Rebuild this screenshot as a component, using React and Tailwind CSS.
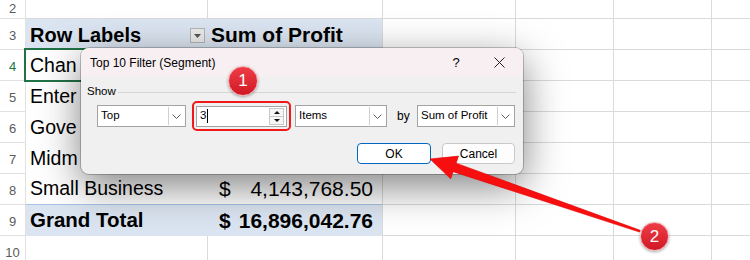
import React from 'react';

const GRID = 'border-[#dadada]';

function Row({ num, height = 'h-[31px]', numClass = 'text-[#5b5b5b] pt-[3px]', aClass = `border-b border-r ${GRID}`, bClass = `border-b border-r ${GRID}`, a, b }) {
  return (
    <div className={`flex ${height}`}>
      <div className={`flex w-[26px] shrink-0 items-center justify-center border-b border-r border-[#e1e1e1] text-[13px] ${numClass}`}>{num}</div>
      <div className={`relative flex w-[182px] shrink-0 items-center pl-[4px] ${aClass}`}>{a}</div>
      <div className={`flex w-[175px] shrink-0 items-center ${bClass}`}>{b}</div>
      <div className={`w-[133px] shrink-0 border-b border-r ${GRID}`} />
      <div className={`w-[98px] shrink-0 border-b border-r ${GRID}`} />
      <div className={`w-[98px] shrink-0 border-b border-r ${GRID}`} />
      <div className={`flex-1 border-b ${GRID}`} />
    </div>
  );
}

function Chevron() {
  return (
    <svg width="9" height="5" viewBox="0 0 9 5">
      <polyline points="0.5,0.5 4.5,4.5 8.5,0.5" fill="none" stroke="#5a5a5a" strokeWidth="1" />
    </svg>
  );
}

function Combo({ width, children }) {
  return (
    <div className={`flex h-[22px] ${width} shrink-0 items-stretch border border-[#a3a3a3] bg-white`}>
      <span className="flex flex-1 items-center pl-[3px]">{children}</span>
      <span className="m-[1px] flex w-[16px] items-center justify-center border-l border-[#d0d0d0]">
        <Chevron />
      </span>
    </div>
  );
}

export default function App() {
  const pivotB = `border-r ${GRID}`;

  return (
    <div className="relative h-[260px] w-[750px] overflow-hidden bg-white font-['Liberation_Sans',Arial,sans-serif] text-black">
      {/* sheet */}
      <div className="flex flex-col">
        <Row num="2" height="h-[19px]" numClass="text-[#5b5b5b]" />
        <Row
          num="3"
          aClass="bg-[#dbe5f1] pr-[3px] justify-between"
          bClass={`bg-[#dbe5f1] pl-[3px] ${pivotB}`}
          a={
            <>
              <span className="text-[20px] font-bold">Row Labels</span>
              <span className="mt-[2px] flex h-[15px] w-[15px] items-center justify-center border border-[#b5b5b5] bg-[#ececec]">
                <svg width="7" height="4" viewBox="0 0 7 4">
                  <polygon points="0,0 7,0 3.5,4" fill="#555" />
                </svg>
              </span>
            </>
          }
          b={<span className="text-[21px] font-bold">Sum of Profit</span>}
        />
        <Row
          num="4"
          numClass="text-[#217346] pt-[3px]"
          aClass=""
          bClass={pivotB}
          a={
            <>
              <span className="text-[19.5px]">Chan</span>
              <span className="absolute -bottom-[1px] -left-[2px] -right-[1px] -top-[2px] border-2 border-[#217346]" />
            </>
          }
        />
        <Row num="5" aClass="" bClass={pivotB} a={<span className="text-[19.5px]">Enter</span>} />
        <Row num="6" aClass="" bClass={pivotB} a={<span className="text-[19.5px]">Gove</span>} />
        <Row num="7" aClass="" bClass={pivotB} a={<span className="text-[19.5px]">Midm</span>} />
        <Row
          num="8"
          aClass="border-b border-[#a7c3e5]"
          bClass="border-b border-b-[#a7c3e5] border-r border-r-[#dadada] justify-between pl-[11px] pr-[9px]"
          a={<span className="text-[19.5px]">Small Business</span>}
          b={
            <>
              <span className="text-[21px]">$</span>
              <span className="text-[21px]">4,143,768.50</span>
            </>
          }
        />
        <Row
          num="9"
          aClass="bg-[#dbe5f1]"
          bClass={`bg-[#dbe5f1] justify-between pl-[11px] pr-[9px] ${pivotB}`}
          a={<span className="text-[20.5px] font-bold">Grand Total</span>}
          b={
            <>
              <span className="text-[21px] font-bold">$</span>
              <span className="text-[21px] font-bold">16,896,042.76</span>
            </>
          }
        />
        <Row num="10" />
      </div>

      {/* dialog */}
      <div className="absolute left-[81px] top-[48px] flex h-[126px] w-[442px] flex-col overflow-hidden rounded-[8px] bg-[#f0f0f0] text-[11.5px] shadow-[0_0_0_1px_rgba(0,0,0,0.22),0_12px_40px_rgba(0,0,0,0.5)]">
        <div className="flex h-[29px] shrink-0 items-center justify-between bg-[#f8eff2] pl-[9px] pr-[14px] text-[12px]">
          <span>Top 10 Filter (Segment)</span>
          <div className="flex items-center gap-[23px]">
            <span className="w-[20px] text-center text-[13px]">?</span>
            <span className="flex w-[20px] justify-center">
              <svg width="11" height="11" viewBox="0 0 11 11">
                <path d="M0.5 0.5 L10.5 10.5 M10.5 0.5 L0.5 10.5" stroke="#222" strokeWidth="1" />
              </svg>
            </span>
          </div>
        </div>

        <div className="flex flex-col">
          <div className="mt-[7px] flex h-[16px] items-center pl-[6px] pr-[7px]">
            <span>Show</span>
            <div className="ml-[2px] h-px flex-1 bg-[#d6d6d6]" />
          </div>

          <div className="mt-[5px] flex h-[22px] items-center pl-[16px]">
            <Combo width="w-[89px]">Top</Combo>
            <div className="relative ml-[10px] flex h-[21px] w-[91px] shrink-0 items-stretch border border-[#a3a3a3] bg-white">
              <span className="flex flex-1 items-center pl-[3px]">
                3<span className="ml-[1px] h-[14px] w-px bg-black" />
              </span>
              <span className="my-[1px] mr-[2px] flex w-[15px] flex-col">
                <span className="flex flex-1 items-center justify-center border border-[#c8c8c8] bg-[#f6f6f6]">
                  <svg width="6" height="3" viewBox="0 0 6 3"><polygon points="0,3 6,3 3,0" fill="#111" /></svg>
                </span>
                <span className="-mt-px flex flex-1 items-center justify-center border border-[#c8c8c8] bg-[#f6f6f6]">
                  <svg width="6" height="3" viewBox="0 0 6 3"><polygon points="0,0 6,0 3,3" fill="#111" /></svg>
                </span>
              </span>
              <span className="absolute -bottom-[5px] -left-[5px] -right-[5px] -top-[6px] rounded-[5px] border-2 border-[#f01818]" />
            </div>
            <div className="ml-[8px]">
              <Combo width="w-[92px]">Items</Combo>
            </div>
            <span className="ml-[10px] w-[13px] text-[12px]">by</span>
            <div className="ml-[7px]">
              <Combo width="w-[98px]">Sum of Profit</Combo>
            </div>
          </div>

          <div className="mt-[16px] flex justify-end gap-[11px] pr-[8px] text-[12px]">
            <button className="flex h-[21px] w-[74px] items-center justify-center rounded-[4px] border border-[#0067c0] bg-white">OK</button>
            <button className="flex h-[21px] w-[73px] items-center justify-center rounded-[4px] border border-[#c9c9c9] bg-[#fdfdfd]">Cancel</button>
          </div>
        </div>
      </div>

      {/* annotations */}
      <svg className="pointer-events-none absolute left-0 top-0" width="750" height="260" viewBox="0 0 750 260">
        <polygon
          points="430,159 458.5,156.1 456.1,163.2 640.2,230.3 639.6,232.1 453.1,171.7 450.7,178.8"
          fill="#f70f0f"
          stroke="#e00000"
          strokeWidth="0.6"
          strokeLinejoin="round"
        />
      </svg>
      <div className="absolute left-[228px] top-[66px] flex h-[30px] w-[30px] items-center justify-center rounded-full border border-[#f3a9ae] bg-linear-to-b from-[#ef3b46] to-[#cf1824] text-[17px] text-white shadow-[0_1px_3px_rgba(0,0,0,0.35)]">
        1
      </div>
      <div className="absolute left-[640px] top-[222px] flex h-[29px] w-[29px] items-center justify-center rounded-full border border-[#f3a9ae] bg-linear-to-b from-[#ef3b46] to-[#cf1824] text-[17px] text-white shadow-[0_1px_3px_rgba(0,0,0,0.35)]">
        2
      </div>
    </div>
  );
}
